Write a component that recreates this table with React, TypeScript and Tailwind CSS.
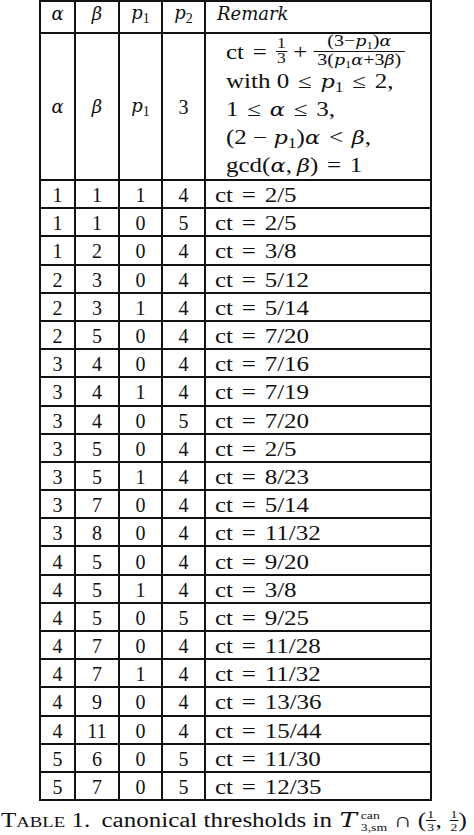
import React from "react";

type Row = [string, string, string, string, string, string];

const rows: Row[] = [
  ["1", "1", "1", "4", "2", "5"],
  ["1", "1", "0", "5", "2", "5"],
  ["1", "2", "0", "4", "3", "8"],
  ["2", "3", "0", "4", "5", "12"],
  ["2", "3", "1", "4", "5", "14"],
  ["2", "5", "0", "4", "7", "20"],
  ["3", "4", "0", "4", "7", "16"],
  ["3", "4", "1", "4", "7", "19"],
  ["3", "4", "0", "5", "7", "20"],
  ["3", "5", "0", "4", "2", "5"],
  ["3", "5", "1", "4", "8", "23"],
  ["3", "7", "0", "4", "5", "14"],
  ["3", "8", "0", "4", "11", "32"],
  ["4", "5", "0", "4", "9", "20"],
  ["4", "5", "1", "4", "3", "8"],
  ["4", "5", "0", "5", "9", "25"],
  ["4", "7", "0", "4", "11", "28"],
  ["4", "7", "1", "4", "11", "32"],
  ["4", "9", "0", "4", "13", "36"],
  ["4", "11", "0", "4", "15", "44"],
  ["5", "6", "0", "5", "11", "30"],
  ["5", "7", "0", "5", "12", "35"],
];

/* italic math letter */
function I({ children, cls = "text-[18px]" }: { children: React.ReactNode; cls?: string }) {
  return <span className={`italic font-['DejaVu_Serif',serif] ${cls}`}>{children}</span>;
}

function Sub({ children }: { children: React.ReactNode }) {
  return <span className="text-[14px] leading-none align-[-4px] not-italic">{children}</span>;
}

function SSub({ children }: { children: React.ReactNode }) {
  return <span className="text-[10px] leading-none align-[-3px] not-italic">{children}</span>;
}

function Rel({ children }: { children: React.ReactNode }) {
  return <span className="mx-[7px] not-italic">{children}</span>;
}

function Frac({
  num,
  den,
  cls = "text-[16px] leading-[16px]",
  pad = "px-[1px]",
}: {
  num: React.ReactNode;
  den: React.ReactNode;
  cls?: string;
  pad?: string;
}) {
  return (
    <span className={`inline-flex flex-col items-center align-middle ${cls}`}>
      <span className={pad}>{num}</span>
      <span className="h-[1px] self-stretch bg-[#111]" />
      <span className={pad}>{den}</span>
    </span>
  );
}

const cell = "border-r-2 border-b-2 border-[#111] flex items-center";
const center = `${cell} justify-center`;

function P({ n }: { n: string }) {
  return (
    <span>
      <I>p</I>
      <Sub>{n}</Sub>
    </span>
  );
}

export default function App() {
  return (
    <div className="w-[474px] h-[835px] overflow-hidden bg-white text-[#111] text-[20px] leading-none font-['Liberation_Serif','Times_New_Roman',serif]">
      <div className="ml-[39px] w-[393px] grid grid-cols-[35px_44px_43px_43px_226px] border-l-2 border-t-2 border-[#111]">
        {/* header row */}
        <div className={`${center} h-[32px] pb-[6px]`}>
          <I>α</I>
        </div>
        <div className={`${center} h-[32px] pb-[6px]`}>
          <I>β</I>
        </div>
        <div className={`${center} h-[32px] pb-[6px]`}>
          <P n="1" />
        </div>
        <div className={`${center} h-[32px] pb-[6px]`}>
          <P n="2" />
        </div>
        <div className={`${cell} h-[32px] pb-[6px] pl-[11px]`}>
          <I>Remark</I>
        </div>

        {/* general row */}
        <div className={`${center} h-[147px]`}>
          <I>α</I>
        </div>
        <div className={`${center} h-[147px]`}>
          <I>β</I>
        </div>
        <div className={`${center} h-[147px]`}>
          <P n="1" />
        </div>
        <div className={`${center} h-[147px]`}>3</div>
        <div className="border-r-2 border-b-2 border-[#111] h-[147px] pl-[20px] pt-[2px]">
          <div className="origin-left scale-x-[1.25] whitespace-nowrap">
            <div className="flex items-center h-[31px]">
              <span>ct</span>
              <Rel>=</Rel>
              <Frac num="1" den="3" cls="text-[14px] leading-[14px]" />
              <span className="mx-[5px]">+</span>
              <Frac
                pad="px-[3px]"
                cls="text-[16px] leading-[15px]"
                num={
                  <>
                    (3−<I cls="text-[14px]">p</I>
                    <SSub>1</SSub>)<I cls="text-[14px]">α</I>
                  </>
                }
                den={
                  <>
                    3(<I cls="text-[14px]">p</I>
                    <SSub>1</SSub>
                    <I cls="text-[14px]">α</I>+3<I cls="text-[14px]">β</I>)
                  </>
                }
              />
            </div>
            <div className="h-[28px] leading-[28px]">
              with 0<Rel>≤</Rel>
              <I>p</I>
              <Sub>1</Sub>
              <Rel>≤</Rel>2,
            </div>
            <div className="h-[28px] leading-[28px]">
              1<Rel>≤</Rel>
              <I>α</I>
              <Rel>≤</Rel>3,
            </div>
            <div className="h-[28px] leading-[28px]">
              (2<span className="mx-[5px]">−</span>
              <I>p</I>
              <Sub>1</Sub>)<I>α</I>
              <Rel>&lt;</Rel>
              <I>β</I>,
            </div>
            <div className="h-[28px] leading-[28px]">
              gcd(<I>α</I>,<span className="ml-[4px]" />
              <I>β</I>)<Rel>=</Rel>1
            </div>
          </div>
        </div>

        {/* data rows */}
        {rows.map((r, i) => (
          <React.Fragment key={i}>
            <div className={`${center} h-[28.2px] pt-[2px]`}>{r[0]}</div>
            <div className={`${center} h-[28.2px] pt-[2px]`}>{r[1]}</div>
            <div className={`${center} h-[28.2px] pt-[2px]`}>{r[2]}</div>
            <div className={`${center} h-[28.2px] pt-[2px]`}>{r[3]}</div>
            <div className={`${cell} h-[28.2px] pt-[2px] pl-[9px]`}>
              <span className="inline-block origin-left scale-x-[1.25] whitespace-nowrap">
                ct<Rel>=</Rel>
                {r[4]}/{r[5]}
              </span>
            </div>
          </React.Fragment>
        ))}
      </div>

      {/* caption */}
      <div className="mt-[6px] pl-[1px] whitespace-nowrap">
        <span className="inline-flex items-center origin-left scale-x-[1.25]">
          <span>
            T<span className="text-[15px]">ABLE</span> 1.
          </span>
          <span className="ml-[9px]">canonical thresholds in</span>
          <span className="ml-[6px]">
            <I cls="text-[21px]">T</I>
          </span>
          <span className="inline-flex flex-col text-[11px] leading-[12px] mt-[2px] ml-[3px]">
            <span>can</span>
            <span>3,sm</span>
          </span>
          <span className="mx-[5px]">∩</span>
          <span>(</span>
          <Frac num="1" den="3" cls="text-[11px] leading-[12px]" />
          <span className="mr-[6px]">,</span>
          <Frac num="1" den="2" cls="text-[11px] leading-[12px]" />
          <span>)</span>
        </span>
      </div>
    </div>
  );
}
